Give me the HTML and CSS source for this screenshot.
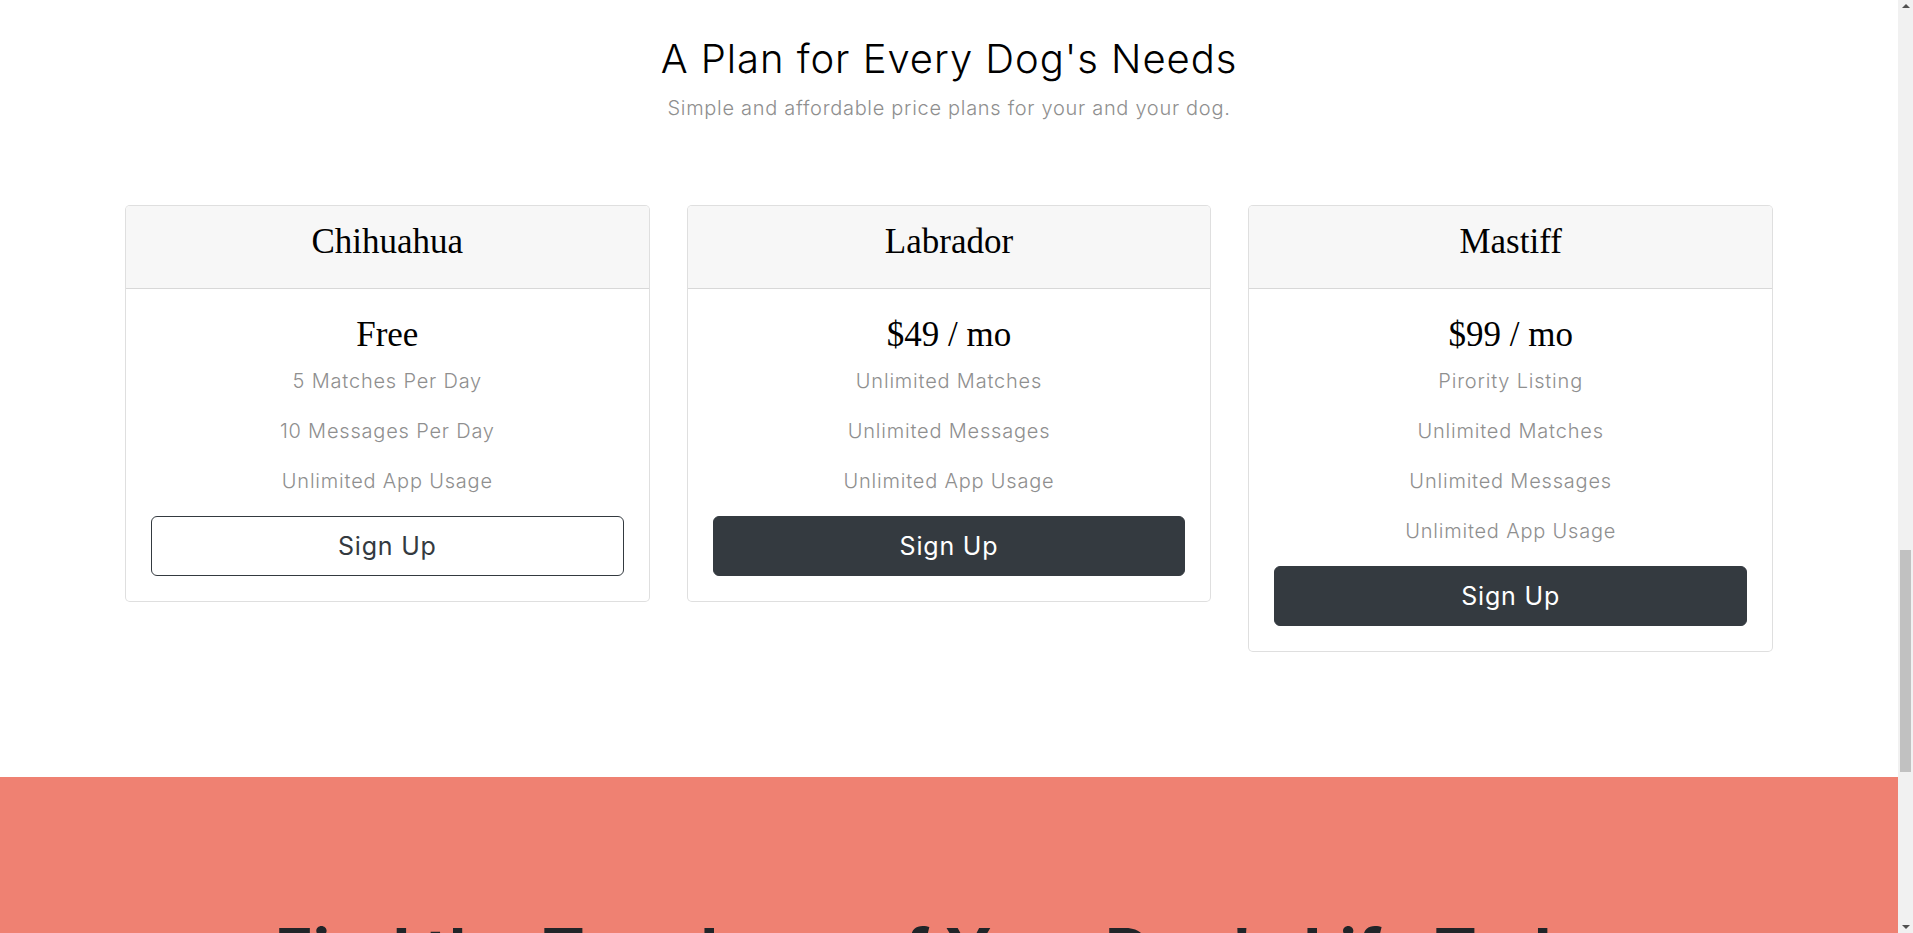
FILE: index.html
```html
<!DOCTYPE html>
<html lang="en">
<head>
<meta charset="utf-8">
<title>TinDog - Pricing</title>
<link rel="stylesheet" href="styles.css">
</head>
<body>
<div class="window">
  <main class="page">
    <section class="pricing">
      <h2 class="pricing-title">A Plan for Every Dog's Needs</h2>
      <p class="pricing-sub">Simple and affordable price plans for your and your dog.</p>
      <div class="pricing-row">
        <div class="card">
          <div class="card-header"><h3 class="plan-name">Chihuahua</h3></div>
          <div class="card-body">
            <h3 class="plan-price">Free</h3>
            <p class="feature">5 Matches Per Day</p>
            <p class="feature">10 Messages Per Day</p>
            <p class="feature">Unlimited App Usage</p>
            <button class="btn btn-outline" type="button">Sign Up</button>
          </div>
        </div>
        <div class="card">
          <div class="card-header"><h3 class="plan-name">Labrador</h3></div>
          <div class="card-body">
            <h3 class="plan-price">$49 / mo</h3>
            <p class="feature">Unlimited Matches</p>
            <p class="feature">Unlimited Messages</p>
            <p class="feature">Unlimited App Usage</p>
            <button class="btn btn-dark" type="button">Sign Up</button>
          </div>
        </div>
        <div class="card">
          <div class="card-header"><h3 class="plan-name">Mastiff</h3></div>
          <div class="card-body">
            <h3 class="plan-price">$99 / mo</h3>
            <p class="feature">Pirority Listing</p>
            <p class="feature">Unlimited Matches</p>
            <p class="feature">Unlimited Messages</p>
            <p class="feature">Unlimited App Usage</p>
            <button class="btn btn-dark" type="button">Sign Up</button>
          </div>
        </div>
      </div>
    </section>
    <section class="cta">
      <h3 class="cta-heading">Find the True Love of Your Dog's Life Today.</h3>
    </section>
  </main>
  <div class="scrollbar" aria-hidden="true">
    <span class="sb-arrow sb-up"></span>
    <span class="sb-track"><span class="sb-thumb"></span></span>
    <span class="sb-arrow sb-down"></span>
  </div>
</div>
</body>
</html>
```
FILE: styles.css
```css
html, body {
  margin: 0;
  padding: 0;
}
body {
  font-family: "Inter", "Liberation Sans", sans-serif;
  color: #212529;
  background: #ffffff;
}
.window {
  display: flex;
  height: 100vh;
  overflow: hidden;
}
.page {
  flex: 1;
  min-width: 0;
  overflow: hidden;
}
.scrollbar {
  flex: none;
  width: 15px;
  background: #f1f1f1;
  display: flex;
  flex-direction: column;
}
.sb-arrow {
  flex: none;
  height: 17px;
  display: flex;
  justify-content: center;
}
.sb-up {
  align-items: flex-start;
  padding-top: 4px;
  box-sizing: border-box;
}
.sb-down {
  align-items: flex-end;
  padding-bottom: 4px;
  box-sizing: border-box;
}
.sb-up::before,
.sb-down::before {
  content: "";
  width: 0;
  height: 0;
  border-left: 4px solid transparent;
  border-right: 4px solid transparent;
}
.sb-up::before {
  border-bottom: 4px solid #505050;
}
.sb-down::before {
  border-top: 4px solid #505050;
}
.sb-track {
  flex: 1;
  padding-top: 533px;
}
.sb-thumb {
  display: block;
  height: 222px;
  margin: 0 2px;
  background: #c1c1c1;
}
.pricing {
  padding: 35px 125px 125px;
  text-align: center;
}
.pricing-title {
  margin: 0 0 10px;
  font-family: "Inter", sans-serif;
  font-weight: 300;
  font-size: 40px;
  line-height: 48px;
  letter-spacing: 0.95px;
  color: #000;
}
.pricing-sub {
  margin: 0;
  font-size: 20px;
  line-height: 30px;
  font-weight: 300;
  letter-spacing: 0.7px;
  color: #8f8f8f;
}
.pricing-row {
  margin-top: 82px;
  display: grid;
  grid-template-columns: repeat(3, 1fr);
  column-gap: 37px;
  align-items: start;
}
.card {
  border: 1px solid rgba(0, 0, 0, 0.125);
  border-radius: 5px;
  background: #fff;
  overflow: hidden;
}
.card-header {
  background: #f7f7f7;
  border-bottom: 1px solid rgba(0, 0, 0, 0.125);
  padding: 15px 25px;
}
.plan-name, .plan-price {
  font-family: "Liberation Serif", "Times New Roman", serif;
  font-weight: 400;
  font-size: 35px;
  line-height: 42px;
  color: #000;
  margin: 0 0 10px;
}
.card-body {
  padding: 25px;
}
.feature {
  margin: 0 0 20px;
  font-size: 20px;
  line-height: 30px;
  font-weight: 300;
  letter-spacing: 0.8px;
  color: #8f8f8f;
}
.btn {
  display: block;
  width: 100%;
  height: 60px;
  border-radius: 6px;
  font-family: "Inter", sans-serif;
  font-size: 25px;
  font-weight: 400;
  letter-spacing: 0.8px;
  cursor: pointer;
}
.btn-outline {
  background: #fff;
  color: #343a40;
  border: 1px solid #343a40;
}
.btn-dark {
  background: #343a40;
  color: #fff;
  border: 1px solid #343a40;
}
.cta {
  background: #ef8172;
  padding: 127px 0 300px 22px;
  text-align: center;
}
.cta-heading {
  margin: 0;
  font-family: "Inter", sans-serif;
  font-weight: 700;
  font-size: 64px;
  line-height: 1.5;
  white-space: nowrap;
  color: #212529;
}
```
